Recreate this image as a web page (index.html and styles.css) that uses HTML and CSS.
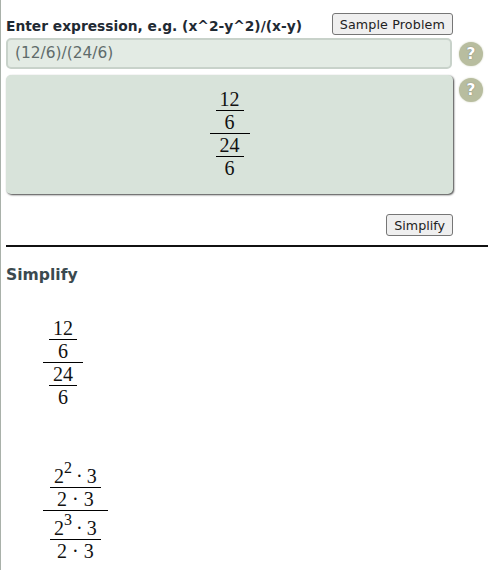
FILE: index.html
```html
<!doctype html>
<html lang="en">
<head>
	<meta charset="UTF-8"/>
	<title>Simplify</title>
	<link rel="stylesheet" href="styles.css">
</head>
<body>
	<div class="wrap">
		<div class="topRow">
			<label class="lbl">Enter expression, e.g. (x^2-y^2)/(x-y)</label>
			<button class="btn sampleBtn">Sample Problem</button>
		</div>
		<div class="inputRow">
			<div class="exprInput">(12/6)/(24/6)</div>
			<span class="help">?</span>
		</div>
		<div class="previewRow">
			<div class="preview">
				<div class="frac outer">
					<div class="num">
						<div class="frac">
							<div class="num">12</div>
							<div class="den">6</div>
						</div>
					</div>
					<div class="den">
						<div class="frac">
							<div class="num">24</div>
							<div class="den">6</div>
						</div>
					</div>
				</div>
			</div>
			<span class="help">?</span>
		</div>
		<div class="submitRow">
			<button class="btn">Simplify</button>
		</div>
		<hr class="rule">
		<h3 class="title">Simplify</h3>
		<div class="step step1">
			<div class="frac outer">
				<div class="num">
					<div class="frac">
						<div class="num">12</div>
						<div class="den">6</div>
					</div>
				</div>
				<div class="den">
					<div class="frac">
						<div class="num">24</div>
						<div class="den">6</div>
					</div>
				</div>
			</div>
		</div>
		<div class="step step2">
			<div class="frac outer">
				<div class="num">
					<div class="frac">
						<div class="num tall">2<sup>2</sup> · 3</div>
						<div class="den">2 · 3</div>
					</div>
				</div>
				<div class="den">
					<div class="frac">
						<div class="num tall">2<sup>3</sup> · 3</div>
						<div class="den">2 · 3</div>
					</div>
				</div>
			</div>
		</div>
	</div>
</body>
</html>
```

FILE: styles.css
```css
*				{ padding:0; margin:0; box-sizing:border-box; }
html, body		{ height:100%; overflow:hidden; background:#fff; }
body			{ border-left:1px solid #a9b1aa; font-family:"DejaVu Sans", Verdana, sans-serif; color:#222; }
.wrap			{ padding:13px 6px 0 5px; width:488px; }
.topRow			{ display:flex; justify-content:space-between; align-items:flex-start; width:447px; height:25px; }
.lbl			{ font-size:13.8px; font-weight:bold; color:#1f2a33; padding-top:5px; white-space:nowrap; }
.btn			{ font-family:"DejaVu Sans", Verdana, sans-serif; font-size:12.7px; color:#222; background:#efefef; border:1px solid #767676; border-radius:3px; height:22px; padding:0 7px; }
.sampleBtn		{ letter-spacing:0.13px; }
.inputRow		{ display:flex; align-items:center; height:31px; }
.exprInput		{ width:447px; height:31px; line-height:27px; padding-left:7px; font-size:15.4px; color:#5f6b6b; background:#e3ebe4; border:2px solid #c8d2ca; border-radius:5px; }
.help			{ width:24px; height:24px; margin-left:7px; border-radius:50%; background:#b8bd9f; box-shadow:0 0 2px #ccd0bb; color:#fff; font-size:16px; font-weight:bold; line-height:24px; text-align:center; text-shadow:0 0 1px #555; flex:none; }
.previewRow		{ display:flex; align-items:flex-start; margin-top:6px; }
.previewRow .help	{ margin:3px 0 0 6px; }
.preview		{ width:448px; height:119px; padding-top:13px; background:#d8e3da; border-radius:5px; box-shadow:1px 1px 2px #444; display:flex; justify-content:center; align-items:flex-start; }
.submitRow		{ display:flex; justify-content:flex-end; width:447px; margin-top:20px; height:22px; }
.rule			{ border:0; border-top:2px solid #111; margin-top:9px; width:482px; }
.title			{ font-size:15.6px; font-weight:bold; color:#3b4a4f; margin-top:18px; line-height:20px; }
.step			{ font-family:"Liberation Serif", "Times New Roman", serif; }
.step1			{ margin:32px 0 0 37px; }
.step2			{ margin:51px 0 0 37px; }
.frac			{ display:inline-flex; flex-direction:column; align-items:stretch; text-align:center; font-family:"Liberation Serif", "Times New Roman", serif; font-size:20px; line-height:22px; color:#111; vertical-align:top; }
.frac .num		{ border-bottom:1px solid #000; padding:0 4px; white-space:nowrap; height:23px; }
.frac .num.tall	{ height:29px; padding-top:6px; word-spacing:-1px; }
.frac .den		{ padding:0 4px; white-space:nowrap; height:22px; }
.outer > .num, .outer > .den	{ height:auto; padding:0 6px; }
.step2 .outer > .num, .step2 .outer > .den	{ padding:0 7px; }
sup				{ font-size:16px; line-height:0; vertical-align:10px; }
```
